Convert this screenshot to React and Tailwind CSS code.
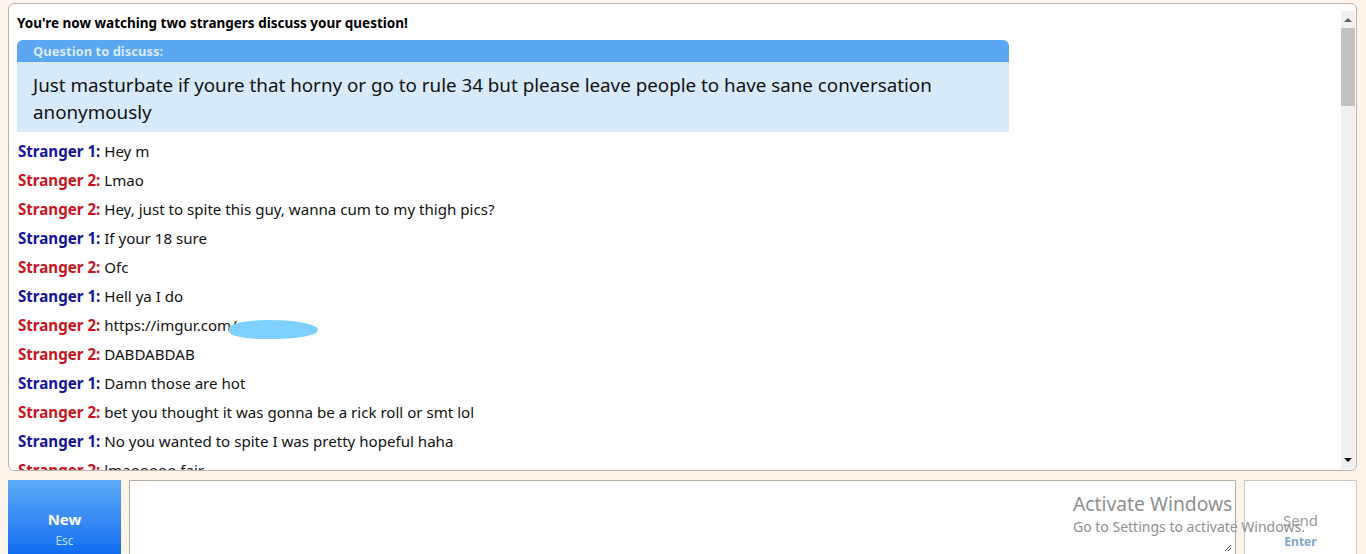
import React from "react";

const messages = [
  [1, "Hey m"],
  [2, "Lmao"],
  [2, "Hey, just to spite this guy, wanna cum to my thigh pics?"],
  [1, "If your 18 sure"],
  [2, "Ofc"],
  [1, "Hell ya I do"],
  [2, "https://imgur.com/", true],
  [2, "DABDABDAB"],
  [1, "Damn those are hot"],
  [2, "bet you thought it was gonna be a rick roll or smt lol"],
  [1, "No you wanted to spite I was pretty hopeful haha"],
  [2, "lmaooooo fair"],
];

const font = { fontFamily: '"Noto Sans", "Open Sans", Arial, sans-serif' };

export default function App() {
  return (
    <div
      className="relative h-[554px] w-[1366px] overflow-hidden bg-[#fdf5ec] pl-[8px] pr-[9px] pt-[3px] text-black"
      style={font}
    >
      {/* chat log */}
      <div className="flex h-[468px] overflow-hidden rounded-[6px] border border-[#bdb3a8] bg-white">
        <div className="min-w-0 flex-1 overflow-hidden pl-[8px] pt-[10px]">
          <div className="text-[13.5px] font-bold leading-[19px]">
            You're now watching two strangers discuss your question!
          </div>
          <div className="mt-[7px] w-[992px]">
            <div className="h-[22px] rounded-t-[6px] bg-[#5aa6f1] pl-[16px] text-[13px] font-bold leading-[22px] text-[#d8ebff]">
              Question to discuss:
            </div>
            <div className="bg-[#d6eafc] pb-[6px] pl-[16px] pr-[40px] pt-[10px] text-[18.8px] leading-[27px] text-[#111]">
              Just masturbate if youre that horny or go to rule 34 but please leave people to have sane conversation anonymously
            </div>
          </div>
          <div className="mt-[5px]">
            {messages.map(([who, text, blurred], i) => (
              <div key={i} className="relative h-[29px] pl-[1px] text-[15.1px] leading-[29px] text-[#111]">
                <span
                  className={
                    who === 1
                      ? "font-bold text-[#12129a]"
                      : "font-bold text-[#c8131b]"
                  }
                >
                  Stranger {who}:
                </span>{" "}
                {text}
                {blurred && (
                  <span className="absolute left-[212px] top-[9px] h-[19px] w-[89px] rounded-[50%_60%_55%_45%] bg-[#7dd0ff]" />
                )}
              </div>
            ))}
          </div>
        </div>
        {/* scrollbar */}
        <div className="mb-[1px] mr-[1px] mt-[7px] flex w-[14px] flex-col bg-[#f0f0f0]">
          <div className="flex h-[17px] items-center justify-center">
            <svg width="8" height="5" viewBox="0 0 8 5">
              <path d="M0 5 L4 1 L8 5 Z" fill="#606060" />
            </svg>
          </div>
          <div className="h-[78px] bg-[#c1c1c1]" />
          <div className="flex-1" />
          <div className="flex h-[17px] items-center justify-center">
            <svg width="8" height="5" viewBox="0 0 8 5">
              <path d="M0 0 L8 0 L4 4 Z" fill="#111" />
            </svg>
          </div>
        </div>
      </div>

      {/* bottom controls */}
      <div className="mt-[9px] flex h-[80px] gap-[8px]">
        <button className="flex w-[113px] flex-col items-center justify-start bg-gradient-to-b from-[#5eaaf8] to-[#0466ee] pt-[28px]">
          <span className="text-[15px] font-bold leading-[22px] text-white">New</span>
          <span className="text-[12px] leading-[22px] text-[#bfe0ff]">Esc</span>
        </button>
        <div className="relative flex-1 border border-[#b5aca2] bg-white">
          <svg className="absolute left-[1094px] top-[63px]" width="8" height="8" viewBox="0 0 8 8">
            <path d="M7 1 L1 7 M7 4 L4 7" stroke="#555" strokeWidth="1" />
          </svg>
        </div>
        <button className="flex w-[113px] flex-col items-center justify-start border border-[#cfc6bb] bg-white pt-[28px]">
          <span className="text-[15px] leading-[22px] text-[#9a9a9a]">Send</span>
          <span className="text-[12px] font-bold leading-[22px] text-[#7ea6cc]">Enter</span>
        </button>
      </div>

      {/* windows watermark */}
      <div className="pointer-events-none absolute left-[1073px] top-[491px] text-[#8f8f8f]">
        <div className="text-[19.3px] leading-[26px]">Activate Windows</div>
        <div className="text-[14px] leading-[20px]">Go to Settings to activate Windows.</div>
      </div>
    </div>
  );
}
